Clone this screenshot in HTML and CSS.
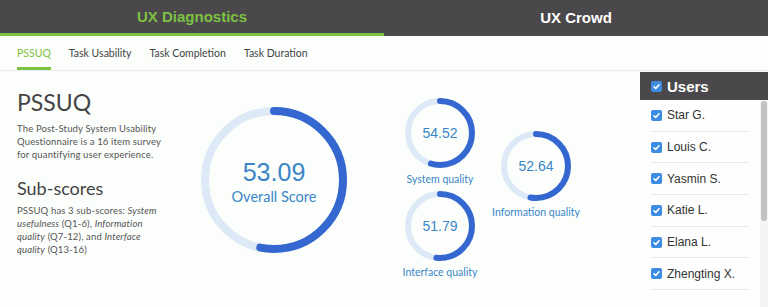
FILE: index.html
```html
<!DOCTYPE html>
<html>
<head>
<meta charset="utf-8">
<link rel="stylesheet" href="styles.css">
</head>
<body>
<header class="topnav">
  <div class="topnav-item active">UX Diagnostics</div>
  <div class="topnav-item">UX Crowd</div>
</header>
<nav class="tabs">
  <a class="tab active">PSSUQ</a>
  <a class="tab">Task Usability</a>
  <a class="tab">Task Completion</a>
  <a class="tab">Task Duration</a>
</nav>
<main class="main">
  <section class="intro">
    <h1 class="title">PSSUQ</h1>
    <p class="desc">The Post-Study System Usability Questionnaire is a 16 item survey for quantifying user experience.</p>
    <h2 class="subtitle">Sub-scores</h2>
    <p class="desc">PSSUQ has 3 sub-scores: <em>System usefulness</em> (Q1-6), <em>Information quality</em> (Q7-12), and <em>Interface quality</em> (Q13-16)</p>
  </section>
  <section class="overall">
    <div class="donut big">
      <svg viewBox="0 0 146 146" width="146" height="146">
        <circle class="track" cx="73" cy="73" r="69" stroke-width="8"></circle>
        <circle class="bar" cx="73" cy="73" r="69" stroke-width="8" stroke-dasharray="230.2 433.5" transform="rotate(-90 73 73)"></circle>
      </svg>
      <div class="donut-label">
        <div class="big-value">53.09</div>
        <div class="big-caption">Overall Score</div>
      </div>
    </div>
  </section>
  <section class="subs">
    <div class="sub sys">
      <div class="donut small">
        <svg viewBox="0 0 70 70" width="70" height="70">
          <circle class="track" cx="35" cy="35" r="32" stroke-width="6"></circle>
          <circle class="bar" cx="35" cy="35" r="32" stroke-width="6" stroke-dasharray="109.6 201.1" transform="rotate(-90 35 35)"></circle>
        </svg>
        <div class="donut-label"><div class="small-value">54.52</div></div>
      </div>
      <div class="sub-caption">System quality</div>
    </div>
    <div class="sub info">
      <div class="donut small">
        <svg viewBox="0 0 70 70" width="70" height="70">
          <circle class="track" cx="35" cy="35" r="32" stroke-width="6"></circle>
          <circle class="bar" cx="35" cy="35" r="32" stroke-width="6" stroke-dasharray="105.9 201.1" transform="rotate(-90 35 35)"></circle>
        </svg>
        <div class="donut-label"><div class="small-value">52.64</div></div>
      </div>
      <div class="sub-caption">Information quality</div>
    </div>
    <div class="sub iface">
      <div class="donut small">
        <svg viewBox="0 0 70 70" width="70" height="70">
          <circle class="track" cx="35" cy="35" r="32" stroke-width="6"></circle>
          <circle class="bar" cx="35" cy="35" r="32" stroke-width="6" stroke-dasharray="104.1 201.1" transform="rotate(-90 35 35)"></circle>
        </svg>
        <div class="donut-label"><div class="small-value">51.79</div></div>
      </div>
      <div class="sub-caption">Interface quality</div>
    </div>
  </section>
  <aside class="users">
    <div class="users-head">
      <span class="check"><svg viewBox="0 0 11 11" width="11" height="11"><path d="M3 5.8 L4.8 7.4 L8 3.8" /></svg></span>
      <span>Users</span>
    </div>
    <div class="users-body">
      <ul class="user-list">
        <li><span class="check"><svg viewBox="0 0 11 11" width="11" height="11"><path d="M3 5.8 L4.8 7.4 L8 3.8" /></svg></span>Star G.</li>
        <li><span class="check"><svg viewBox="0 0 11 11" width="11" height="11"><path d="M3 5.8 L4.8 7.4 L8 3.8" /></svg></span>Louis C.</li>
        <li><span class="check"><svg viewBox="0 0 11 11" width="11" height="11"><path d="M3 5.8 L4.8 7.4 L8 3.8" /></svg></span>Yasmin S.</li>
        <li><span class="check"><svg viewBox="0 0 11 11" width="11" height="11"><path d="M3 5.8 L4.8 7.4 L8 3.8" /></svg></span>Katie L.</li>
        <li><span class="check"><svg viewBox="0 0 11 11" width="11" height="11"><path d="M3 5.8 L4.8 7.4 L8 3.8" /></svg></span>Elana L.</li>
        <li><span class="check"><svg viewBox="0 0 11 11" width="11" height="11"><path d="M3 5.8 L4.8 7.4 L8 3.8" /></svg></span>Zhengting X.</li>
      </ul>
      <div class="scrollbar"><div class="thumb"></div></div>
    </div>
  </aside>
</main>
</body>
</html>
```

FILE: styles.css
```css
* { box-sizing: border-box; }
html, body { margin: 0; padding: 0; }
body {
  width: 768px;
  height: 307px;
  overflow: hidden;
  background: #fcfefc;
  font-family: "Lato", "Open Sans", sans-serif;
  color: #444;
}
.topnav {
  display: flex;
  height: 36px;
  background: #4a484b;
}
.topnav-item {
  flex: 1;
  display: flex;
  align-items: center;
  justify-content: center;
  font-family: "Liberation Sans", Arial, sans-serif;
  font-weight: bold;
  font-size: 15px;
  color: #fff;
  padding-bottom: 1px;
}
.topnav-item.active {
  color: #7cc242;
  border-bottom: 3px solid #7cc242;
}
.tabs {
  display: flex;
  height: 35px;
  padding-left: 17px;
  gap: 18px;
  border-bottom: 1px solid #ececec;
}
.tab {
  display: flex;
  align-items: center;
  font-size: 10.5px;
  color: #444;
  border-bottom: 3px solid transparent;
  padding-top: 3px;
}
.tab.active {
  color: #7cc242;
  border-bottom-color: #7cc242;
}
.main {
  display: flex;
  align-items: flex-start;
  height: 236px;
}
.intro {
  width: 178px;
  flex: none;
  padding-left: 17px;
  padding-top: 14px;
}
.title {
  margin: 0;
  font-size: 23px;
  font-weight: normal;
  color: #444;
  line-height: 34px;
}
.subtitle {
  margin: 14px 0 0;
  font-size: 18px;
  font-weight: normal;
  color: #444;
  line-height: 26px;
}
.desc {
  margin: 3px 0 0;
  font-size: 9.5px;
  line-height: 13px;
  letter-spacing: 0.15px;
  color: #555;
  width: 146px;
}
.desc em { font-style: italic; }
.overall {
  flex: none;
  margin-left: 23px;
  margin-top: 36px;
}
.donut {
  position: relative;
}
.donut svg { display: block; }
.track { fill: none; stroke: #dde9f7; }
.bar { fill: none; stroke: #3468d0; stroke-linecap: round; }
.donut-label {
  position: absolute;
  inset: 0;
  display: flex;
  flex-direction: column;
  align-items: center;
  justify-content: center;
}
.big-value {
  font-family: "Liberation Sans", Arial, sans-serif;
  font-size: 25px;
  color: #3a86c8;
  line-height: 28px;
}
.big-caption {
  font-size: 14.5px;
  color: #3a86c8;
  margin-top: 2px;
  margin-bottom: -2px;
}
.subs {
  flex: none;
  display: grid;
  grid-template-columns: 90px 90px;
  column-gap: 6px;
  row-gap: 5px;
  margin-left: 48px;
  margin-top: 27px;
}
.sub {
  display: flex;
  flex-direction: column;
  align-items: center;
}
.sys { grid-column: 1; grid-row: 1; }
.iface { grid-column: 1; grid-row: 2; }
.info { grid-column: 2; grid-row: 1 / span 2; margin-top: 33px; }
.small-value {
  font-family: "Liberation Sans", Arial, sans-serif;
  font-size: 14px;
  color: #3a86c8;
}
.sub-caption {
  margin-top: 4px;
  font-size: 10.5px;
  line-height: 14px;
  color: #3a86c8;
  white-space: nowrap;
}
.users {
  flex: none;
  margin-left: auto;
  margin-top: 1px;
  width: 128px;
  align-self: stretch;
  display: flex;
  flex-direction: column;
}
.users-head {
  height: 28px;
  background: #4a484b;
  display: flex;
  align-items: center;
  gap: 5px;
  padding-left: 11px;
  font-family: "Liberation Sans", Arial, sans-serif;
  font-weight: bold;
  font-size: 15px;
  color: #fff;
}
.check {
  width: 11px;
  height: 11px;
  border-radius: 2px;
  background: #3c8ce2;
  display: inline-flex;
  flex: none;
}
.check path {
  fill: none;
  stroke: #fff;
  stroke-width: 1.6;
  stroke-linecap: round;
  stroke-linejoin: round;
}
.users-body {
  flex: 1;
  display: flex;
  overflow: hidden;
  background: #fdfefd;
}
.user-list {
  list-style: none;
  margin: 0;
  padding: 0 0 0 11px;
  width: 109px;
  flex: none;
}
.user-list li {
  height: 31.7px;
  display: flex;
  align-items: center;
  gap: 5px;
  border-bottom: 1px solid #e8e8e8;
  font-family: "Liberation Sans", Arial, sans-serif;
  font-size: 12px;
  color: #333;
}
.scrollbar {
  margin-left: auto;
  width: 8px;
  padding: 1px 1px 0 0;
  background: #f4f4f4;
}
.thumb {
  width: 6px;
  height: 120px;
  margin-left: 1px;
  border-radius: 3px;
  background: #c2c2c2;
}
```
